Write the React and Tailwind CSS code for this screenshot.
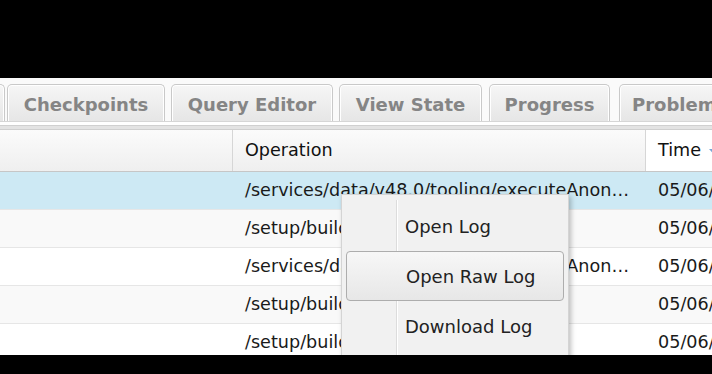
import React from "react";

const font = { fontFamily: '"DejaVu Sans", Verdana, sans-serif' };

function Tab({ label, className = "" }) {
  return (
    <div
      className={`h-[37px] pt-[3px] flex items-center justify-center rounded-t-[5px] border border-b-0 border-[#c9c9c9] bg-gradient-to-b from-[#f6f6f6] to-[#e6e6e6] shadow-[inset_0_1px_0_#ffffff,inset_1px_0_0_#ffffff,inset_-1px_0_0_#ffffff] text-[18px] font-bold text-[#858585] shrink-0 ${className}`}
    >
      {label}
    </div>
  );
}

const rows = [
  { op: "/services/data/v48.0/tooling/executeAnon…", bg: "bg-[#cde9f4]" },
  { op: "/setup/build/allTests.apexp", bg: "bg-[#f9f9f9]" },
  { op: "/services/data/v48.0/tooling/executeAnon…", bg: "bg-white" },
  { op: "/setup/build/allTests.apexp", bg: "bg-[#f9f9f9]" },
  { op: "/setup/build/allTests.apexp", bg: "bg-white" },
];

export default function App() {
  return (
    <div className="w-[712px] h-[374px] bg-black flex flex-col overflow-hidden" style={font}>
      <div className="h-[78px] shrink-0 bg-black" />
      <div className="h-[277px] shrink-0 bg-white relative overflow-hidden flex flex-col">
        {/* tab strip */}
        <div className="h-[43px] shrink-0 bg-[#fafafa] flex items-end">
          <Tab label="" className="w-[45px] ml-[-40px] mr-[2px]" />
          <Tab label="Checkpoints" className="w-[158px] mr-[6px]" />
          <Tab label="Query Editor" className="w-[162px] mr-[6px]" />
          <Tab label="View State" className="w-[143px] mr-[7px]" />
          <Tab label="Progress" className="w-[121px] mr-[9px]" />
          <Tab label="Problems" className="w-[120px] justify-start pl-[12px]" />
        </div>
        <div className="h-[4px] shrink-0 bg-white border-t border-[#d6d6d6]" />
        <div className="h-[5px] shrink-0 bg-[#e3e3e3] border-t border-[#d0d0d0] border-b border-b-[#cfcfcf]" />
        {/* header */}
        <div className="h-[42px] shrink-0 flex border-b border-[#c6c6c6] bg-gradient-to-b from-[#fbfbfb] to-[#efefef] text-[17.6px] text-[#111]">
          <div className="w-[233px] shrink-0 border-r border-[#d6d6d6]" />
          <div className="w-[413px] shrink-0 border-r border-[#d6d6d6] flex items-center pl-[12px]">Operation</div>
          <div className="flex-1 flex items-center pl-[12px] bg-white gap-[8px] whitespace-nowrap">
            Time
            <svg width="9" height="6" viewBox="0 0 9 6" className="mt-[2px]">
              <path d="M0 0 L9 0 L4.5 5 Z" fill="#79a6d6" />
            </svg>
          </div>
        </div>
        {/* rows */}
        {rows.map((r, i) => (
          <div key={i} className={`h-[38px] shrink-0 flex border-b border-[#e6e6e6] text-[17.6px] text-[#1a1a1a] ${r.bg}`}>
            <div className="w-[233px] shrink-0" />
            <div className="w-[413px] shrink-0 flex items-center pl-[12px] overflow-hidden whitespace-nowrap">{r.op}</div>
            <div className="flex-1 flex items-center pl-[12px] overflow-hidden whitespace-nowrap">05/06/2020 10:14:22</div>
          </div>
        ))}
        {/* context menu */}
        <div className="absolute left-[341px] top-[116px] w-[228px] h-[200px] bg-[#f1f1f1] border border-[#d4d4d4] shadow-[2px_2px_5px_rgba(0,0,0,0.25)] flex">
          <div className="absolute left-[54px] top-[5px] bottom-0 w-[1px] bg-[#dcdcdc]" />
          <div className="absolute left-[55px] top-[5px] bottom-0 w-[1px] bg-white" />
          <div className="flex flex-col w-full pt-[6px] text-[18px] text-[#222]">
            <div className="h-[50px] flex items-center pl-[63px]">Open Log</div>
            <div className="h-[50px] mx-[4px] flex items-center pl-[59px] rounded-[4px] border border-[#adadad] bg-gradient-to-b from-[#f7f7f7] to-[#e7e7e7] relative z-10">Open Raw Log</div>
            <div className="h-[50px] flex items-center pl-[63px]">Download Log</div>
          </div>
        </div>
      </div>
      <div className="flex-1 bg-black" />
    </div>
  );
}
